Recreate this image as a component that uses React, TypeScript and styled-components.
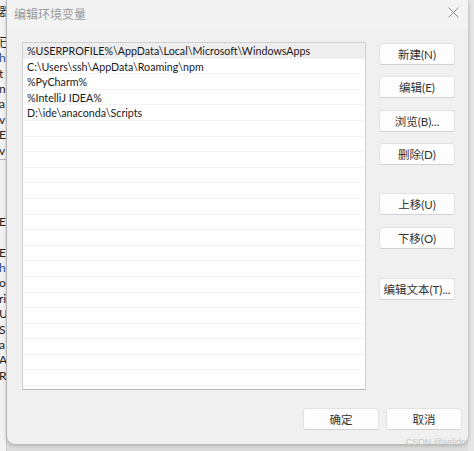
import React from "react";
import styled, { createGlobalStyle } from "styled-components";

const GlobalStyle = createGlobalStyle`
  html, body {
    margin: 0;
    padding: 0;
    background: #e4e4e4;
  }
  body {
    font-family: Lato, "Noto Sans CJK SC", sans-serif;
    -webkit-font-smoothing: antialiased;
  }
`;

const paths = [
  "%USERPROFILE%\\AppData\\Local\\Microsoft\\WindowsApps",
  "C:\\Users\\ssh\\AppData\\Roaming\\npm",
  "%PyCharm%",
  "%IntelliJ IDEA%",
  "D:\\ide\\anaconda\\Scripts",
];

const sideTop = ["器", "", "已", "h", "t", "n", "a", "v", "E", "v"];
const sideBottom = ["E", "", "E", "h", "o", "ri", "U", "S", "a", "A", "R"];

const App = () => {
  const emptyRows = Array.from({ length: 18 });
  return (
    <>
      <GlobalStyle />
      <Page>
        <Behind>
          <SideGroup>
            {sideTop.map((c, i) => (
              <SideLine key={i} $blue={c === "h"}>
                {c}
              </SideLine>
            ))}
          </SideGroup>
          <SideBar />
          <SideGroup $offset={54}>
            {sideBottom.map((c, i) => (
              <SideLine key={i} $blue={c === "h"}>
                {c}
              </SideLine>
            ))}
          </SideGroup>
        </Behind>
        <Dialog>
          <TitleBar>
            <Title>编辑环境变量</Title>
            <Close>
              <svg width="11" height="11" viewBox="0 0 11 11">
                <path d="M0.5 0.5 L10.5 10.5 M10.5 0.5 L0.5 10.5" stroke="#8a8a8a" strokeWidth="1" />
              </svg>
            </Close>
          </TitleBar>
          <Body>
            <List>
              {paths.map((p, i) => (
                <Row key={p} $selected={i === 0}>
                  {p}
                </Row>
              ))}
              {emptyRows.map((_, i) => (
                <Row key={"e" + i} />
              ))}
            </List>
            <Side>
              <Button>新建(N)</Button>
              <Button $gap={11.3}>编辑(E)</Button>
              <Button $gap={11.3}>浏览(B)...</Button>
              <Button $gap={11.3}>删除(D)</Button>
              <Button $gap={28}>上移(U)</Button>
              <Button $gap={12}>下移(O)</Button>
              <Button $gap={29}>编辑文本(T)...</Button>
            </Side>
          </Body>
          <Footer>
            <Button>确定</Button>
            <Button>取消</Button>
          </Footer>
          <Watermark>CSDN @jialidn</Watermark>
        </Dialog>
        <RightEdge />
      </Page>
    </>
  );
};

export default App;

const Page = styled.div`
  display: flex;
  width: 474px;
  height: 451px;
  overflow: hidden;
  background: #dcdcdc;
`;

const Behind = styled.div`
  width: 7px;
  height: 451px;
  flex-shrink: 0;
  overflow: hidden;
  background: #f2f2f2;
  display: flex;
  flex-direction: column;
  border-right: 1px solid #c9c9c9;
  box-sizing: border-box;
`;

const SideGroup = styled.div<{ $offset?: number }>`
  display: flex;
  flex-direction: column;
  margin-top: ${(p) => p.$offset ?? 4}px;
`;

const SideLine = styled.div<{ $blue?: boolean }>`
  height: 15.4px;
  overflow: hidden;
  font-size: 12px;
  line-height: 15.4px;
  white-space: nowrap;
  color: ${(p) => (p.$blue ? "#1f4e8c" : "#222")};
  margin-left: -1px;
`;

const SideBar = styled.div`
  height: 1px;
  margin-top: 1px;
  background: #b8b8b8;
`;

const Dialog = styled.div`
  position: relative;
  width: 461px;
  height: 444px;
  flex-shrink: 0;
  background: #f0f0f0;
  border-radius: 0 0 8px 8px;
  box-shadow: 0 1px 4px rgba(0, 0, 0, 0.28);
  display: flex;
  flex-direction: column;
  z-index: 1;
`;

const TitleBar = styled.div`
  height: 28px;
  display: flex;
  align-items: center;
  justify-content: space-between;
  padding: 0 9px 0 7px;
  background: #f3f3f3;
`;

const Title = styled.div`
  font-size: 12px;
  color: #9a9a9a;
  font-family: "Noto Sans CJK SC", sans-serif;
  margin-top: -2px;
`;

const Close = styled.div`
  display: flex;
  align-items: center;
  margin-top: -4px;
`;

const Body = styled.div`
  display: flex;
  gap: 13px;
  padding: 14px 0 0 15px;
`;

const List = styled.div`
  width: 344px;
  height: 348px;
  box-sizing: border-box;
  background: #fff;
  border: 1px solid #cfcfcf;
  border-bottom-color: #b5b5b5;
  overflow: hidden;
  display: flex;
  flex-direction: column;
`;

const Row = styled.div<{ $selected?: boolean }>`
  flex-shrink: 0;
  height: 15.6px;
  box-sizing: border-box;
  padding-left: 4px;
  font-size: 10.7px;
  line-height: 15px;
  color: #1a1a1a;
  white-space: nowrap;
  background: ${(p) => (p.$selected ? "#eeeeee" : "#fff")};
  border-bottom: 1px solid #f3f3f3;
`;

const Side = styled.div`
  display: flex;
  flex-direction: column;
  padding-top: 1px;
`;

const Button = styled.div<{ $gap?: number }>`
  width: 76px;
  height: 22px;
  box-sizing: border-box;
  margin-top: ${(p) => p.$gap ?? 0}px;
  display: flex;
  align-items: center;
  justify-content: center;
  background: #fdfdfd;
  border: 1px solid #e2e2e2;
  border-bottom-color: #d2d2d2;
  border-radius: 3px;
  font-size: 11.5px;
  color: #333;
  font-family: Lato, "Noto Sans CJK SC", sans-serif;
`;

const Footer = styled.div`
  display: flex;
  justify-content: flex-end;
  gap: 7px;
  padding: 18px 6px 0 0;
`;

const Watermark = styled.div`
  position: absolute;
  right: 2px;
  bottom: -3px;
  font-size: 9px;
  color: #c4c4c4;
  font-family: "Liberation Sans", sans-serif;
  white-space: nowrap;
`;

const RightEdge = styled.div`
  flex: 1;
  background: #e6e6e6;
`;
